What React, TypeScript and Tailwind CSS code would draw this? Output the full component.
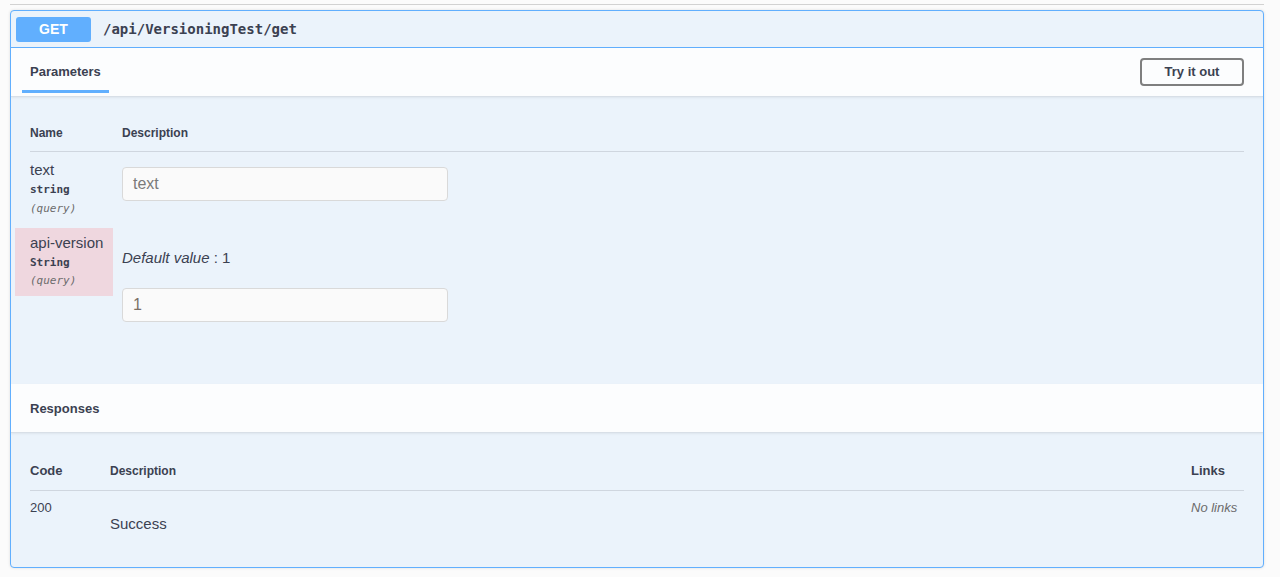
import React from "react";

export default function App() {
  return (
    <div
      className="w-[1280px] h-[577px] bg-[#fbfbfb] pt-[4px] pl-[10px] pr-[16px] text-[#3b4151] font-['Liberation_Sans',Arial,sans-serif]"
    >
      <div className="h-px bg-[#d2d2d2]" />
      <div className="mt-[5px] h-[558px] border border-[#61affe] rounded-[4px] bg-[#ebf3fb] flex flex-col overflow-hidden shadow-[0_0_3px_rgba(0,0,0,0.12)]">
        {/* summary */}
        <div className="h-[37px] shrink-0 flex items-center px-[5px] border-b border-[#61affe]">
          <div className="w-[75px] h-[25px] rounded-[3px] bg-[#61affe] text-white font-bold text-[14px] flex items-center justify-center">
            GET
          </div>
          <div className="ml-[12px] font-['DejaVu_Sans_Mono',monospace] font-bold text-[14px] text-[#3b4151]">
            /api/VersioningTest/get
          </div>
        </div>

        {/* parameters header */}
        <div className="h-[49px] shrink-0 bg-white/85 border-b border-[#d8dfe7] shadow-[0_1px_2px_rgba(0,0,0,0.06)] flex items-end justify-between pl-[11px] pr-[19px]">
          <div className="px-[8px] h-[48px] flex flex-col justify-end">
            <div className="text-[13px] font-bold leading-[18px] mb-[9px]">Parameters</div>
            <div className="h-[3px] bg-[#61affe] -mx-[8px] mb-[3px]" />
          </div>
          <div className="h-[48px] flex items-center">
            <button className="w-[104px] h-[28px] border-2 border-[#7f7f7f] rounded-[4px] text-[13px] font-bold text-[#3b4151] bg-transparent">
              Try it out
            </button>
          </div>
        </div>

        {/* parameters body */}
        <div className="h-[287px] shrink-0 px-[19px] pt-[28px]">
          <div className="h-[27px] border-b border-[#cfd6df] flex text-[12px] font-bold leading-[16px]">
            <div className="w-[92px]">Name</div>
            <div>Description</div>
          </div>

          <div className="flex items-start">
            <div className="w-[92px] pt-[9px]">
              <div className="text-[15px] leading-[18px]">text</div>
              <div className="mt-[2px] text-[11px] leading-[18px] font-bold font-['DejaVu_Sans_Mono',monospace]">string</div>
              <div className="mt-[1px] text-[11px] leading-[18px] italic text-[#6b6b6b] font-['DejaVu_Sans_Mono',monospace]">(query)</div>
            </div>
            <div className="pt-[15px]">
              <div className="w-[326px] h-[34px] rounded-[4px] border border-[#d9d9d9] bg-[#fafafa] pl-[10px] flex items-center text-[16px] text-[#7a7a7a]">
                text
              </div>
            </div>
          </div>

          <div className="flex items-start mt-[10px]">
            <div className="w-[98px] -ml-[15px] mr-[9px] pl-[15px] pt-[6px] pb-[6px] bg-[#efd7df]">
              <div className="text-[15px] leading-[18px] whitespace-nowrap">api-version</div>
              <div className="mt-[2px] text-[11px] leading-[18px] font-bold font-['DejaVu_Sans_Mono',monospace]">String</div>
              <div className="text-[11px] leading-[18px] italic text-[#6b6b6b] font-['DejaVu_Sans_Mono',monospace]">(query)</div>
            </div>
            <div className="pt-[21px]">
              <div className="text-[15px] leading-[18px]">
                <span className="italic">Default value</span> : 1
              </div>
              <div className="mt-[21px] w-[326px] h-[34px] rounded-[4px] border border-[#d9d9d9] bg-[#fafafa] pl-[10px] flex items-center text-[16px] text-[#7a6f66]">
                1
              </div>
            </div>
          </div>
        </div>

        {/* responses header */}
        <div className="h-[49px] shrink-0 bg-white/85 border-b border-[#d8dfe7] shadow-[0_1px_2px_rgba(0,0,0,0.06)] flex items-center pl-[19px] pt-[1px]">
          <div className="text-[13px] font-bold">Responses</div>
        </div>

        {/* responses body */}
        <div className="px-[19px] pt-[30px]">
          <div className="h-[28px] border-b border-[#cfd6df] flex items-start">
            <div className="w-[80px] text-[13px] font-bold leading-[16px]">Code</div>
            <div className="flex-1 text-[12px] font-bold leading-[16px]">Description</div>
            <div className="w-[53px] text-[13px] font-bold leading-[16px]">Links</div>
          </div>
          <div className="flex">
            <div className="w-[80px] pt-[8px] text-[13px] leading-[18px]">200</div>
            <div className="flex-1 pt-[24px] text-[15px] leading-[18px]">Success</div>
            <div className="w-[53px] pt-[8px] text-[13px] leading-[18px] italic text-[#6b6b6b] whitespace-nowrap">No links</div>
          </div>
        </div>
      </div>
    </div>
  );
}
